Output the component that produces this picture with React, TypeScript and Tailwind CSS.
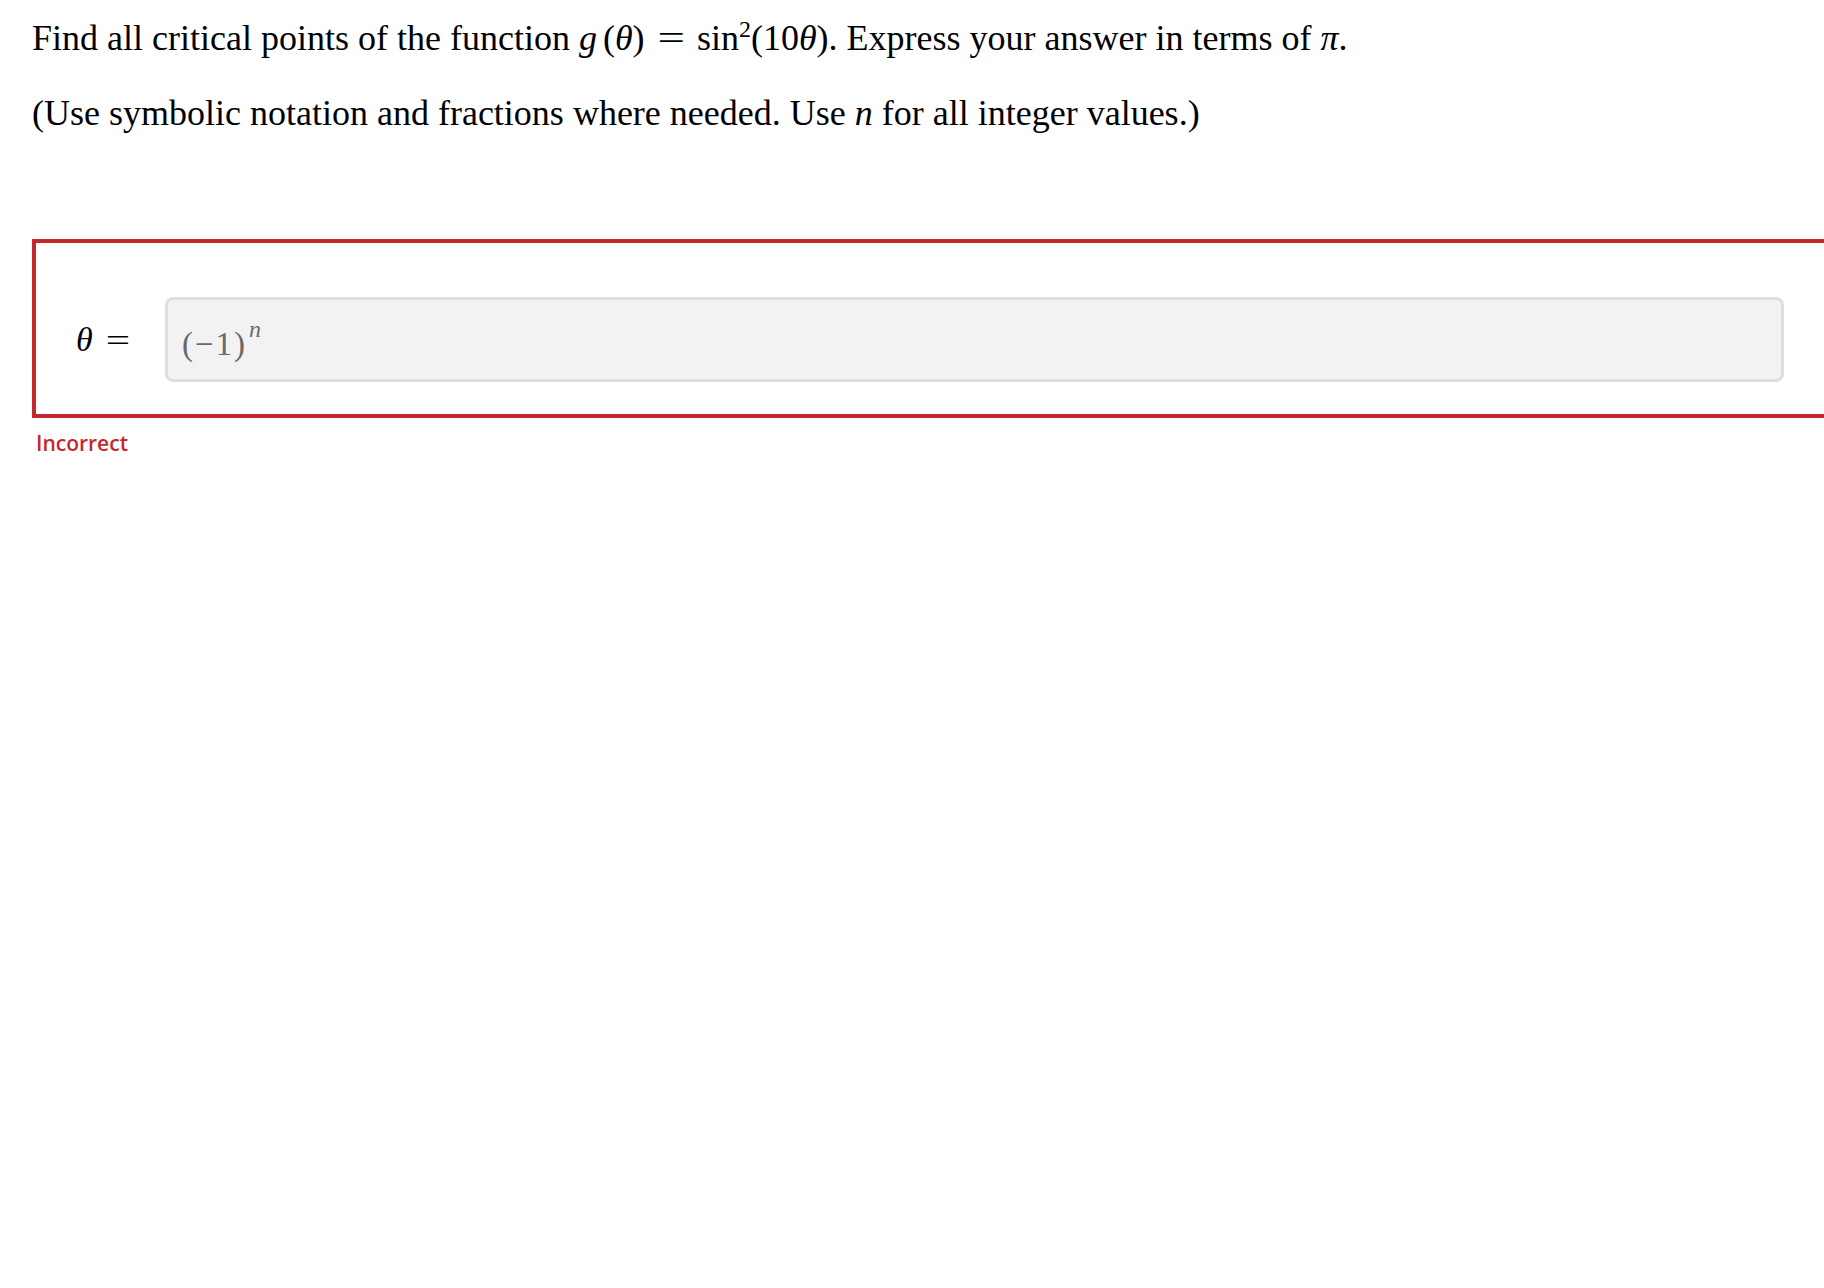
const serif = "font-['Liberation_Serif','Times_New_Roman',serif]";

function M({ children }: { children: React.ReactNode }) {
  return <span className="italic">{children}</span>;
}

function Eq() {
  return <span className="inline-block scale-x-[1.35]">=</span>;
}

export default function App() {
  return (
    <div className="min-h-screen overflow-hidden bg-white pl-8 pt-[18px] text-black">
      <p className={`${serif} text-[36px] leading-[40px] whitespace-nowrap`}>
        Find all critical points of the function <M>g</M>
        <span className="ml-[6px]">(</span>
        <M>θ</M>)<span className="mx-[16px]"><Eq /></span>sin
        <sup className="-top-[13px] text-[24px]">2</sup>(10<M>θ</M>). Express your answer in terms of <M>π</M>.
      </p>
      <p className={`${serif} mt-[35px] text-[36px] leading-[40px] whitespace-nowrap`}>
        (Use symbolic notation and fractions where needed. Use <M>n</M> for all integer values.)
      </p>

      <div className="mt-[106px] w-[1830px] border-4 border-r-0 border-[#c3282d] pb-8 pl-10 pt-[54px]">
        <div className="flex items-center">
          <div className={`${serif} flex w-[89px] shrink-0 items-center text-[34px] leading-none`}>
            <span className="italic">θ</span>
            <span className="ml-[16px] text-[32px]"><Eq /></span>
          </div>
          <div className="flex h-[85px] w-[1619px] items-start rounded-lg border-[3px] border-[#dedede] bg-[#f2f2f2] pl-[14px] pt-[28px]">
            <span className={`${serif} text-[33px] leading-none tracking-[2px] text-[#6a6a6a]`}>
              (−1)
              <sup className="-top-[18px] ml-[2px] text-[24px] italic">n</sup>
            </span>
          </div>
        </div>
      </div>

      <p className="mt-[10px] pl-1 font-['Open_Sans',sans-serif] text-[21px] font-semibold text-[#c3282d]">
        Incorrect
      </p>
    </div>
  );
}
